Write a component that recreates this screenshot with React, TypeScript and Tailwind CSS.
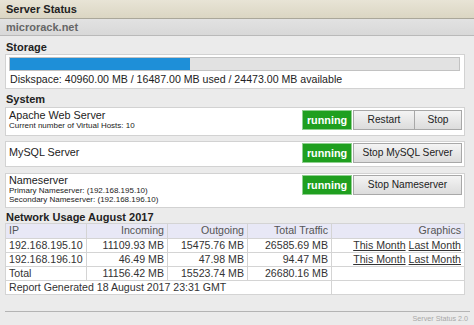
import React from "react";

const rows = [
  { ip: "192.168.195.10", inc: "11109.93 MB", out: "15475.76 MB", total: "26585.69 MB", links: true },
  { ip: "192.168.196.10", inc: "46.49 MB", out: "47.98 MB", total: "94.47 MB", links: true },
  { ip: "Total", inc: "11156.42 MB", out: "15523.74 MB", total: "26680.16 MB", links: false },
];

function Running() {
  return (
    <div className="w-[50px] h-[20px] bg-[#1f9f1f] border border-[#8fcf8f] text-white font-bold text-[10.8px] flex items-center justify-center">
      running
    </div>
  );
}

function Btn({ label, w }: { label: string; w: string }) {
  return (
    <div className={`${w} h-[20px] border border-[#a8a8a8] bg-gradient-to-b from-[#f4f4f4] to-[#dcdcdc] text-[10.2px] text-[#222] flex items-center justify-center`}>
      {label}
    </div>
  );
}

const cell = "border-r border-b border-[#d4d4d4] px-[3px] flex items-center";

export default function App() {
  return (
    <div className="w-[474px] h-[325px] overflow-hidden bg-[#ebebeb] font-['Liberation_Sans',Arial,sans-serif] text-[#222]">
      <div className="h-[19px] border-b border-[#aaa79a] bg-gradient-to-b from-[#e8e4d6] to-[#dbd6c3] px-[6px] flex items-center font-bold text-[11px]">
        Server Status
      </div>
      <div className="h-[17px] border-b border-[#b9b9b9] bg-gradient-to-b from-[#e2e2e2] to-[#d8d8d8] px-[6px] flex items-center font-bold text-[11px] text-[#666]">
        microrack.net
      </div>

      <div className="pl-[5px] pr-[9px]">
        <div className="h-[18px] flex items-end pl-[1px] leading-[14px] font-bold text-[11px]">Storage</div>
        <div className="h-[35px] border border-[#d2d2d2] bg-white pl-[3px] pr-[4px] pt-[2px]">
          <div className="h-[14px] border border-[#c2c2c2] bg-[#e2e2e2]">
            <div className="h-full w-[40%] bg-[#1e8fd8]" />
          </div>
          <div className="leading-[16px] text-[10.6px] pl-[1px]">
            Diskspace: 40960.00 MB / 16487.00 MB used / 24473.00 MB available
          </div>
        </div>

        <div className="h-[18px] flex items-end pb-[1px] pl-[1px] leading-[14px] font-bold text-[11px]">System</div>

        <div className="h-[29px] border border-[#d2d2d2] bg-white flex justify-between pl-[3px] pr-[2px]">
          <div className="pt-[1px]">
            <div className="leading-[12px] text-[10.8px]">Apache Web Server</div>
            <div className="leading-[9px] text-[8px]">Current number of Virtual Hosts: 10</div>
          </div>
          <div className="flex pt-[2px]">
            <Running />
            <Btn label="Restart" w="w-[62px] ml-[1px]" />
            <Btn label="Stop" w="w-[48px] -ml-[1px]" />
          </div>
        </div>

        <div className="mt-[5px] h-[26px] border border-[#d2d2d2] bg-white flex justify-between pl-[3px] pr-[2px]">
          <div className="pt-[4px] leading-[12px] text-[10.8px]">MySQL Server</div>
          <div className="flex pt-[1px]">
            <Running />
            <Btn label="Stop MySQL Server" w="w-[109px] ml-[1px]" />
          </div>
        </div>

        <div className="mt-[6px] h-[35px] border border-[#d2d2d2] bg-white flex justify-between pl-[3px] pr-[2px]">
          <div>
            <div className="leading-[12px] text-[10.8px]">Nameserver</div>
            <div className="leading-[9px] text-[8px]">Primary Nameserver: (192.168.195.10)</div>
            <div className="leading-[9px] text-[8px]">Secondary Nameserver: (192.168.196.10)</div>
          </div>
          <div className="flex pt-[1px]">
            <Running />
            <Btn label="Stop Nameserver" w="w-[109px] ml-[1px]" />
          </div>
        </div>

        <div className="h-[15px] flex items-end pl-[1px] leading-[12px] font-bold text-[11px]">Network Usage August 2017</div>

        <div className="grid grid-cols-[81px_81px_80px_84px_133px] border-t border-l border-[#d4d4d4] bg-white text-[10.6px] text-[#333]">
          <div className={`${cell} h-[15px] bg-[#e8e8f6] text-[#555]`}>IP</div>
          <div className={`${cell} h-[15px] bg-[#e8e8f6] justify-end text-[#555]`}>Incoming</div>
          <div className={`${cell} h-[15px] bg-[#e8e8f6] justify-end text-[#555]`}>Outgoing</div>
          <div className={`${cell} h-[15px] bg-[#e8e8f6] justify-end text-[#555]`}>Total Traffic</div>
          <div className={`${cell} h-[15px] bg-[#e8e8f6] justify-end text-[#555]`}>Graphics</div>
          {rows.map((r) => (
            <React.Fragment key={r.ip}>
              <div className={`${cell} h-[14px]`}>{r.ip}</div>
              <div className={`${cell} h-[14px] justify-end`}>{r.inc}</div>
              <div className={`${cell} h-[14px] justify-end`}>{r.out}</div>
              <div className={`${cell} h-[14px] justify-end`}>{r.total}</div>
              <div className={`${cell} h-[14px] justify-end gap-[3px]`}>
                {r.links && (
                  <>
                    <span className="underline">This Month</span>
                    <span className="underline">Last Month</span>
                  </>
                )}
              </div>
            </React.Fragment>
          ))}
          <div className={`${cell} h-[14px] col-span-4`}>Report Generated 18 August 2017 23:31 GMT</div>
          <div className={`${cell} h-[14px]`} />
        </div>
      </div>

      <div className="mt-[16px] ml-[5px] mr-[4px] border-t border-[#b4b4b4] pt-[2px] text-right pr-[2px] text-[7.2px] leading-[9px] text-[#a8a8a8]">
        Server Status 2.0
      </div>
    </div>
  );
}
